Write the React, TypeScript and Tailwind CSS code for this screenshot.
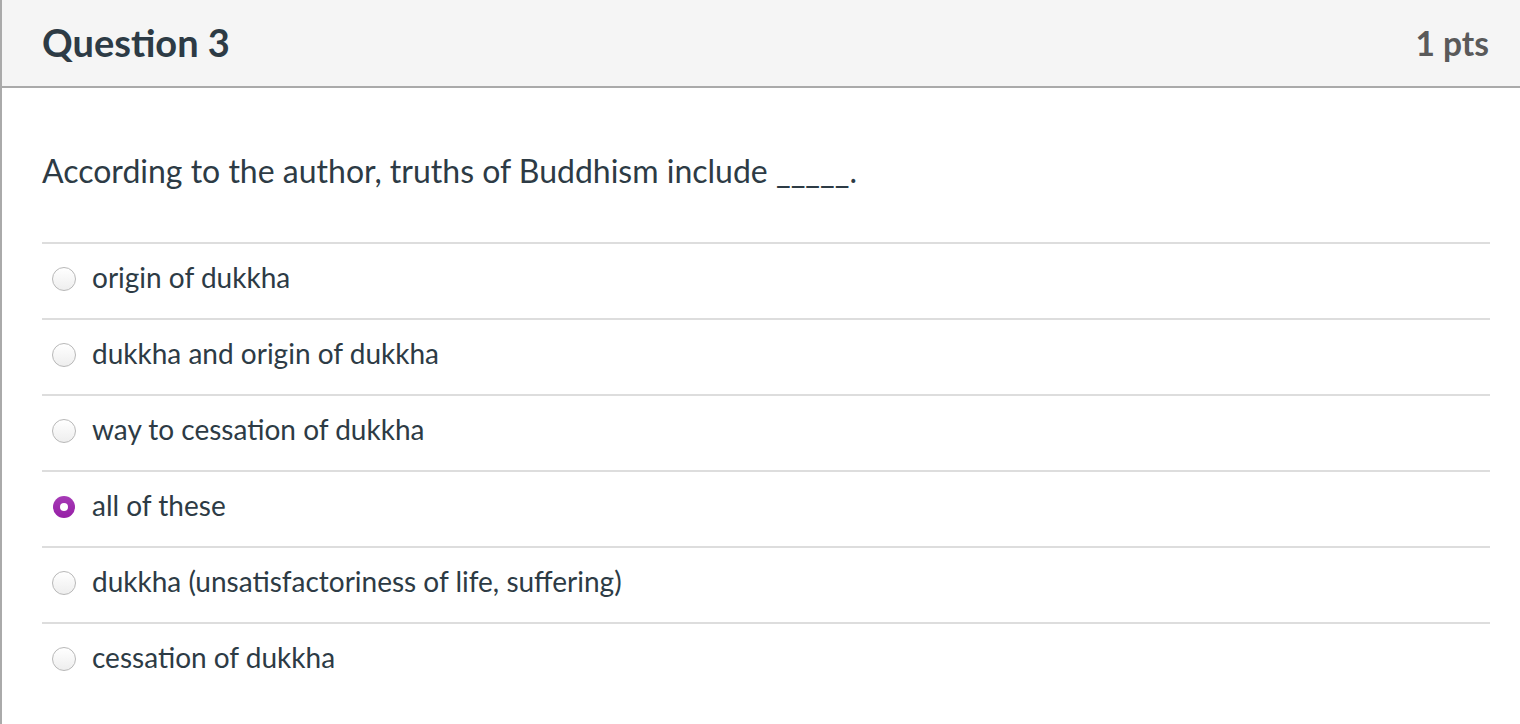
import React from 'react';

const ANSWERS = [
  { id: 'a1', text: 'origin of dukkha', checked: false },
  { id: 'a2', text: 'dukkha and origin of dukkha', checked: false },
  { id: 'a3', text: 'way to cessation of dukkha', checked: false },
  { id: 'a4', text: 'all of these', checked: true },
  { id: 'a5', text: 'dukkha (unsatisfactoriness of life, suffering)', checked: false },
  { id: 'a6', text: 'cessation of dukkha', checked: false },
];

function Radio({ checked }: { checked: boolean }) {
  if (checked) {
    return (
      <span className="w-[22px] h-[22px] shrink-0 rounded-full bg-gradient-to-b from-[#a63ab6] to-[#961ea6] flex items-center justify-center ml-[11px] mr-[1px] mt-[12px]">
        <span className="w-[8px] h-[8px] rounded-full bg-white" />
      </span>
    );
  }
  return (
    <span className="w-[24px] h-[24px] shrink-0 rounded-full border border-[#b8b8b8] bg-gradient-to-b from-white to-[#eeeeee] ml-[10px] mt-[11px]" />
  );
}

export default function App() {
  return (
    <div
      className="min-h-[724px] bg-white border-l-2 border-[#aaaaaa] text-[#2d3b45]"
      style={{ fontFamily: 'Lato, "Open Sans", sans-serif' }}
    >
      <div className="h-[88px] bg-[#f5f5f5] border-b-2 border-[#aaaaaa] flex items-center justify-between pl-[40px] pr-[31px]">
        <h2 className="text-[38px] font-bold leading-[1.2]">Question 3</h2>
        <span className="text-[33.5px] font-bold leading-[1.2] text-[#5a5a5a]">1 pts</span>
      </div>

      <div className="pl-[40px] pr-[30px] pt-[59px]">
        <p className="text-[32px] leading-[48px] mb-[47px]">
          According to the author, truths of Buddhism include _____.
        </p>

        <div>
          {ANSWERS.map((a) => (
            <label key={a.id} className="flex items-start gap-[16px] border-t-2 border-[#dddddd] pt-[12px] pb-[20px]">
              <Radio checked={a.checked} />
              <span className="text-[28px] leading-[42px]">{a.text}</span>
            </label>
          ))}
        </div>
      </div>
    </div>
  );
}
